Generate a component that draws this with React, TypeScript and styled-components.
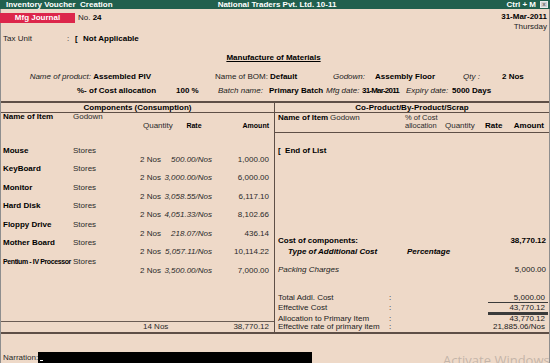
import React from 'react';
import styled, { createGlobalStyle } from 'styled-components';

const BG = '#eed9c8';
const LINE = '#5e4f47';

const Global = createGlobalStyle`
  html, body { margin: 0; padding: 0; background: ${BG}; }
  body { font-family: "Liberation Sans", Arial, sans-serif; font-size: 8px; color: #1c1c1c; }
  #root { width: 550px; height: 363px; overflow: hidden; }
  * { box-sizing: border-box; }
`;

const Screen = styled.div`
  position: relative;
  width: 550px;
  height: 363px;
  overflow: hidden;
  background: ${BG};
  display: flex;
  flex-direction: column;
`;

const TitleBar = styled.div`
  height: 9px;
  flex: none;
  background: #21604e;
  color: #fff;
  font-weight: bold;
  font-size: 8px;
  line-height: 9px;
  display: grid;
  grid-template-columns: 1fr auto 1fr;
  padding: 0 2px 0 6px;
  white-space: pre;
`;

const TitleRight = styled.div`
  display: flex;
  justify-content: flex-end;
  align-items: center;
  gap: 4px;
`;

const CloseBox = styled.span`
  width: 8px;
  height: 7px;
  border: 1px solid #eaeaea;
  background: #cfcfcf;
  color: #333;
  font-size: 6px;
  line-height: 5px;
  text-align: center;
  font-weight: normal;
`;

const Main = styled.div`
  flex: 1;
  border-left: 1px solid #8e8e8e;
  border-right: 1px solid #8e8e8e;
  display: flex;
  flex-direction: column;
`;

const TopRow = styled.div`
  height: 25px;
  display: flex;
  justify-content: space-between;
`;

const VoucherLeft = styled.div`
  display: flex;
  align-items: flex-start;
`;

const Badge = styled.div`
  margin: 4px 0 0 -1px;
  width: 75px;
  height: 10px;
  background: #dc264b;
  color: #fff;
  font-weight: bold;
  line-height: 10px;
  text-align: center;
`;

const VoucherNo = styled.div`
  margin: 4px 0 0 3px;
  line-height: 10px;
  & b { color: #000; }
`;

const DateBlock = styled.div`
  padding: 3px 2px 0 0;
  text-align: right;
  line-height: 10px;
`;

const Line = styled.div<{ $bold?: boolean }>`
  font-weight: ${p => (p.$bold ? 'bold' : 'normal')};
  color: ${p => (p.$bold ? '#000' : '#222')};
`;

const TaxRow = styled.div`
  height: 10px;
  line-height: 10px;
  display: grid;
  grid-template-columns: 64px 8px 8px auto;
  padding-left: 2px;
`;

const Bold = styled.span`
  font-weight: bold;
  color: #000;
`;

const Heading = styled.div`
  margin-top: 9px;
  height: 10px;
  line-height: 10px;
  text-align: center;
  font-weight: bold;
  color: #000;
  text-decoration: underline;
  padding-right: 3px;
`;

const InfoRow = styled.div<{ $mt: number }>`
  margin-top: ${p => p.$mt}px;
  height: 10px;
  line-height: 10px;
  display: flex;
  white-space: nowrap;
`;

const Field = styled.span<{ $w?: number; $b?: boolean; $i?: boolean; $r?: boolean; $tight?: boolean }>`
  flex: none;
  width: ${p => (p.$w ? p.$w + 'px' : 'auto')};
  font-weight: ${p => (p.$b ? 'bold' : 'normal')};
  font-style: ${p => (p.$i ? 'italic' : 'normal')};
  text-align: ${p => (p.$r ? 'right' : 'left')};
  color: ${p => (p.$b ? '#000' : '#222')};
  letter-spacing: ${p => (p.$tight ? '-0.8px' : 'normal')};
`;

const Panels = styled.div`
  margin-top: 5px;
  display: grid;
  grid-template-columns: 274px 1fr;
  height: 233px;
  border-top: 2px solid ${LINE};
  border-bottom: 2px solid ${LINE};
`;

const Panel = styled.div<{ $divider?: boolean }>`
  display: flex;
  flex-direction: column;
  min-width: 0;
  ${p => (p.$divider ? `border-right: 1px solid ${LINE};` : '')}
`;

const SectionHead = styled.div`
  height: 10px;
  line-height: 9px;
  border-bottom: 1px solid ${LINE};
  text-align: center;
  font-weight: bold;
  color: #000;
`;

const HeadLine = styled.div<{ $h: number; $pl: number; $cols: string }>`
  height: ${p => p.$h}px;
  line-height: ${p => p.$h}px;
  padding-left: ${p => p.$pl}px;
  display: grid;
  grid-template-columns: ${p => p.$cols};
  white-space: nowrap;
`;

const HeadCell = styled.span<{ $b?: boolean; $align?: string; $fs?: number }>`
  font-weight: ${p => (p.$b ? 'bold' : 'normal')};
  color: ${p => (p.$b ? '#000' : '#2a2a2a')};
  text-align: ${p => p.$align || 'left'};
  font-size: ${p => p.$fs ?? 8}px;
`;

const RateAmount = styled.span`
  display: flex;
  justify-content: space-between;
  padding-right: 5px;
  font-weight: bold;
  color: #000;
`;

const ItemList = styled.div`
  margin-top: 14.5px;
  display: flex;
  flex-direction: column;
`;

const Item = styled.div`
  height: 18.5px;
  display: flex;
  flex-direction: column;
`;

const ItemName = styled.div`
  height: 9px;
  line-height: 9px;
  padding-left: 2px;
  display: grid;
  grid-template-columns: 70px 1fr;
  white-space: nowrap;
`;

const NameText = styled.span<{ $tight?: boolean }>`
  font-weight: bold;
  color: #000;
  font-size: ${p => (p.$tight ? '7px' : '8px')};
  letter-spacing: ${p => (p.$tight ? '-0.4px' : 'normal')};
`;

const Plain = styled.span`
  color: #2a2a2a;
`;

const QtyLine = styled.div`
  height: 9.5px;
  line-height: 9.5px;
  padding-left: 139px;
  display: grid;
  grid-template-columns: 24px 48px 57px;
  white-space: nowrap;
  color: #2a2a2a;
`;

const Num = styled.span<{ $i?: boolean }>`
  text-align: right;
  font-style: ${p => (p.$i ? 'italic' : 'normal')};
`;

const Grow = styled.div`
  flex: 1;
`;

const Footer = styled.div`
  height: 11px;
  line-height: 10px;
  border-top: 1px solid #6a5c54;
  padding-left: 142px;
  display: grid;
  grid-template-columns: 40px 86px;
  color: #2a2a2a;
`;

const RightHead = styled.div`
  height: 20px;
  padding-top: 0.5px;
  border-bottom: 1px solid ${LINE};
`;

const RRow = styled.div<{ $mt: number }>`
  margin-top: ${p => p.$mt}px;
  height: 9px;
  line-height: 9px;
  padding: 0 3px 0 3px;
  display: flex;
  justify-content: space-between;
  white-space: nowrap;
`;

const TypeRow = styled.div`
  margin-top: 2px;
  height: 9px;
  line-height: 9px;
  padding-left: 13px;
  display: grid;
  grid-template-columns: 119px auto;
  font-weight: bold;
  font-style: italic;
  color: #000;
`;

const SumList = styled.div`
  margin-top: 19px;
  display: flex;
  flex-direction: column;
`;

const SumRow = styled.div<{ $h: number; $mt?: number }>`
  height: ${p => p.$h}px;
  line-height: ${p => p.$h}px;
  margin-top: ${p => p.$mt ?? 0}px;
  padding-left: 3px;
  display: grid;
  grid-template-columns: 111px 99px 60px;
  color: #222;
  white-space: nowrap;
`;

const SumValue = styled.span<{ $rule?: 'single' | 'double' }>`
  text-align: right;
  padding-right: 3px;
  box-shadow: ${p =>
    p.$rule === 'single'
      ? `0 1px 0 #3a3a3a`
      : p.$rule === 'double'
      ? `0 1px 0 #3a3a3a, 0 3px 0 #3a3a3a`
      : 'none'};
`;

const NarrationRow = styled.div`
  margin-top: 18px;
  height: 11px;
  display: flex;
`;

const NarrLabel = styled.span`
  width: 37px;
  padding-left: 2px;
  line-height: 11px;
  color: #2a2a2a;
`;

const NarrBox = styled.div`
  width: 274px;
  background: #000;
  padding: 0 0 0 2px;
`;

const Cursor = styled.span`
  display: inline-block;
  margin-top: 8px;
  width: 3px;
  height: 1px;
  background: #fff;
`;

const Watermark = styled.div`
  position: absolute;
  left: 443px;
  top: 352px;
  font-family: "Open Sans", "Liberation Sans", sans-serif;
  font-size: 13px;
  line-height: 16px;
  color: rgba(160, 150, 142, 0.55);
  white-space: nowrap;
  pointer-events: none;
`;

type Comp = { name: string; tight?: boolean; rate: string; amount: string };

const components: Comp[] = [
  { name: 'Mouse', rate: '500.00/Nos', amount: '1,000.00' },
  { name: 'KeyBoard', rate: '3,000.00/Nos', amount: '6,000.00' },
  { name: 'Monitor', rate: '3,058.55/Nos', amount: '6,117.10' },
  { name: 'Hard Disk', rate: '4,051.33/Nos', amount: '8,102.66' },
  { name: 'Floppy Drive', rate: '218.07/Nos', amount: '436.14' },
  { name: 'Mother Board', rate: '5,057.11/Nos', amount: '10,114.22' },
  { name: 'Pentium - IV Processor', tight: true, rate: '3,500.00/Nos', amount: '7,000.00' },
];

export default function App() {
  return (
    <Screen>
      <Global />
      <TitleBar>
        <span>Inventory Voucher  Creation</span>
        <span>National Traders Pvt. Ltd. 10-11</span>
        <TitleRight>
          <span>Ctrl + M</span>
          <CloseBox>x</CloseBox>
        </TitleRight>
      </TitleBar>
      <Main>
        <TopRow>
          <VoucherLeft>
            <Badge>Mfg Journal</Badge>
            <VoucherNo>
              No. <b>24</b>
            </VoucherNo>
          </VoucherLeft>
          <DateBlock>
            <Line $bold>31-Mar-2011</Line>
            <Line>Thursday</Line>
          </DateBlock>
        </TopRow>
        <TaxRow>
          <span>Tax Unit</span>
          <span>:</span>
          <Bold>[</Bold>
          <Bold>Not Applicable</Bold>
        </TaxRow>
        <Heading>Manufacture of Materials</Heading>
        <InfoRow $mt={9}>
          <Field $w={90} $i $r>Name of product:</Field>
          <Field $w={124} $b>&nbsp;Assembled PIV</Field>
          <Field $w={55}>Name of BOM:</Field>
          <Field $w={63} $b>Default</Field>
          <Field $w={42} $i>Godown:</Field>
          <Field $w={88} $b>Assembly Floor</Field>
          <Field $w={39} $i>Qty :</Field>
          <Field $b>2 Nos</Field>
        </InfoRow>
        <InfoRow $mt={4}>
          <Field $w={76} />
          <Field $w={12} $b>%-</Field>
          <Field $w={87} $b>of Cost allocation</Field>
          <Field $w={42} $b>100 %</Field>
          <Field $w={51} $i>Batch name:</Field>
          <Field $w={57} $b>Primary Batch</Field>
          <Field $w={36} $i>Mfg date:</Field>
          <Field $w={44} $b $tight>31-Mar-2011</Field>
          <Field $w={46} $i>Expiry date:</Field>
          <Field $b>5000 Days</Field>
        </InfoRow>
        <Panels>
          <Panel $divider>
            <SectionHead>Components (Consumption)</SectionHead>
            <HeadLine $h={8} $pl={2} $cols="70px 1fr">
              <HeadCell $b>Name of Item</HeadCell>
              <HeadCell>Godown</HeadCell>
            </HeadLine>
            <HeadLine $h={10} $pl={142} $cols="40px 22px 64px">
              <HeadCell>Quantity</HeadCell>
              <HeadCell $b $fs={7} $align="center">Rate</HeadCell>
              <HeadCell $b $fs={7} $align="right">Amount</HeadCell>
            </HeadLine>
            <ItemList>
              {components.map(c => (
                <Item key={c.name}>
                  <ItemName>
                    <NameText $tight={c.tight}>{c.name}</NameText>
                    <Plain>Stores</Plain>
                  </ItemName>
                  <QtyLine>
                    <span>2 Nos</span>
                    <Num $i>{c.rate}</Num>
                    <Num>{c.amount}</Num>
                  </QtyLine>
                </Item>
              ))}
            </ItemList>
            <Grow />
            <Footer>
              <span>14 Nos</span>
              <Num>38,770.12</Num>
            </Footer>
          </Panel>
          <Panel>
            <SectionHead>Co-Product/By-Product/Scrap</SectionHead>
            <RightHead>
              <HeadLine $h={8} $pl={3} $cols="52px 75px 1fr">
                <HeadCell $b>Name of Item</HeadCell>
                <HeadCell>Godown</HeadCell>
                <HeadCell $fs={7.5}>% of Cost</HeadCell>
              </HeadLine>
              <HeadLine $h={8} $pl={130} $cols="40px 40px 1fr">
                <HeadCell $fs={7.5}>allocation</HeadCell>
                <HeadCell>Quantity</HeadCell>
                <RateAmount>
                  <span>Rate</span>
                  <span>Amount</span>
                </RateAmount>
              </HeadLine>
            </RightHead>
            <RRow $mt={12.5}>
              <Bold>[&nbsp;&nbsp;End of List</Bold>
            </RRow>
            <RRow $mt={81}>
              <Bold>Cost of components:</Bold>
              <Bold>38,770.12</Bold>
            </RRow>
            <TypeRow>
              <span>Type of Additional Cost</span>
              <span>Percentage</span>
            </TypeRow>
            <RRow $mt={9}>
              <Field $i>Packing Charges</Field>
              <Field>5,000.00</Field>
            </RRow>
            <SumList>
              <SumRow $h={9}>
                <span>Total Addl. Cost</span>
                <span>:</span>
                <SumValue $rule="single">5,000.00</SumValue>
              </SumRow>
              <SumRow $h={9} $mt={1}>
                <span>Effective Cost</span>
                <span>:</span>
                <SumValue $rule="double">43,770.12</SumValue>
              </SumRow>
              <SumRow $h={8} $mt={3}>
                <span>Allocation to Primary Item</span>
                <span>:</span>
                <SumValue>43,770.12</SumValue>
              </SumRow>
              <SumRow $h={8}>
                <span>Effective rate of primary item</span>
                <span>:</span>
                <SumValue>21,885.06/Nos</SumValue>
              </SumRow>
            </SumList>
          </Panel>
        </Panels>
        <NarrationRow>
          <NarrLabel>Narration:</NarrLabel>
          <NarrBox>
            <Cursor />
          </NarrBox>
        </NarrationRow>
      </Main>
      <Watermark>Activate Windows</Watermark>
    </Screen>
  );
}
